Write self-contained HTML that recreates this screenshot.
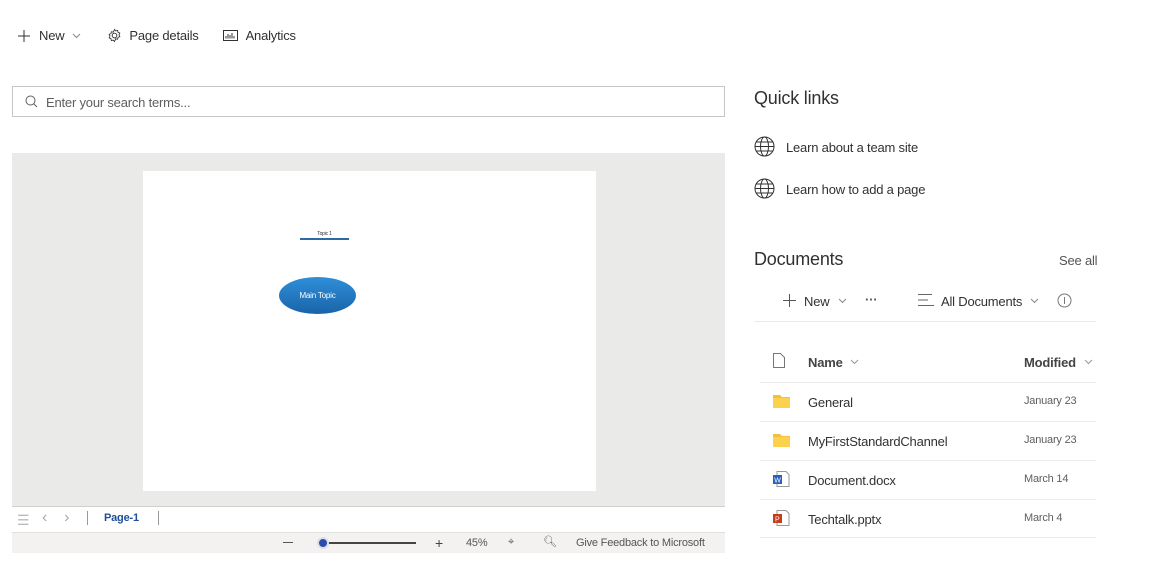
<!DOCTYPE html>
<html><head><meta charset="utf-8"><style>
*{box-sizing:border-box;margin:0;padding:0}
body{width:1160px;height:570px;background:#fff;font-family:"Liberation Sans",sans-serif;color:#323130;position:relative;overflow:hidden;font-size:13px;letter-spacing:-0.2px}
.a{position:absolute}
.row{position:absolute;left:760px;width:336px;height:39px;border-bottom:1px solid #edebe9}
.row .n{position:absolute;left:48px;top:12px;font-size:13px;color:#323130}
.row .d{position:absolute;left:264px;top:12px;font-size:11px;color:#605e5c}
.row .ic{position:absolute;left:13px;top:12px}
</style></head><body>
<div class="a" style="left:17px;top:28px;font-size:13px;display:flex;align-items:center">
<svg width="14" height="14" viewBox="0 0 14 14"><path d="M7 1v12M1 7h12" stroke="#323130" stroke-width="1"/></svg>
<span style="margin-left:8px">New</span><svg style="margin-left:8px" width="9" height="6" viewBox="0 0 9 6"><path d="M1 1l3.5 3.5L8 1" stroke="#888" fill="none"/></svg>
<svg style="margin-left:26px" width="15" height="15" viewBox="0 0 16 16"><circle cx="8" cy="8" r="2.5" fill="none" stroke="#323130"/><path d="M8 1.5l1.3 1.6 2-.5.5 2 1.9.8-.9 1.9.9 1.9-1.9.8-.5 2-2-.5L8 14.5l-1.3-1.6-2 .5-.5-2-1.9-.8.9-1.9-.9-1.9 1.9-.8.5-2 2 .5z" fill="none" stroke="#323130" stroke-width=".9"/></svg>
<span style="margin-left:7px">Page details</span>
<svg style="margin-left:24px" width="15" height="13" viewBox="0 0 15 13"><rect x=".5" y="1.5" width="14" height="10" fill="none" stroke="#323130"/><path d="M3 9.5V7M5 9.5V5M7 9.5V6M9 9.5V4M11 9.5V7" stroke="#323130"/></svg>
<span style="margin-left:8px">Analytics</span></div>
<div class="a" style="left:12px;top:86px;width:713px;height:31px;border:1px solid #c8c6c4"></div>
<svg class="a" style="left:25px;top:95px" width="13" height="13" viewBox="0 0 13 13"><circle cx="5.5" cy="5.5" r="4.5" fill="none" stroke="#605e5c"/><path d="M8.7 8.7L12 12" stroke="#605e5c"/></svg>
<div class="a" style="left:46px;top:95px;font-size:13px;color:#605e5c">Enter your search terms...</div>
<div class="a" style="left:12px;top:153px;width:713px;height:354px;background:#eaeae8"></div>
<div class="a" style="left:143px;top:171px;width:453px;height:320px;background:#fff"></div>
<div class="a" style="left:300px;top:231px;width:49px;font-size:5px;text-align:center">Topic 1</div>
<div class="a" style="left:300px;top:238px;width:49px;height:2px;background:#2d6aa3"></div>
<div class="a" style="left:279px;top:277px;width:77px;height:37px;border-radius:50%;background:linear-gradient(#2e8fd9,#1a64a8);color:#fff;font-size:8px;text-align:center;line-height:37px">Main Topic</div>
<div class="a" style="left:12px;top:506px;width:713px;height:1px;background:#d2d0ce"></div>
<div class="a" style="left:17px;top:512px;color:#bbb;font-size:14px">☰</div>
<div class="a" style="left:42px;top:509px;color:#aaa;font-size:16px">‹&nbsp;&nbsp;&nbsp;&nbsp;›</div>
<div class="a" style="left:87px;top:511px;width:1px;height:14px;background:#999"></div>
<div class="a" style="left:104px;top:512px;font-size:11px;color:#1f4e99;font-weight:bold">Page-1</div>
<div class="a" style="left:158px;top:511px;width:1px;height:14px;background:#999"></div>
<div class="a" style="left:12px;top:532px;width:713px;height:21px;background:#f3f2f1;border-top:1px solid #e1dfdd"></div>
<div class="a" style="left:283px;top:542px;width:10px;height:1px;background:#555"></div>
<div class="a" style="left:322px;top:542px;width:94px;height:2px;background:#444"></div>
<div class="a" style="left:317px;top:537px;width:12px;height:12px;border-radius:50%;background:#2b4fa8;border:2px solid #dde"></div>
<div class="a" style="left:435px;top:535px;font-size:14px;color:#444">+</div>
<div class="a" style="left:466px;top:537px;font-size:11px;color:#555">45%</div>
<div class="a" style="left:508px;top:536px;font-size:11px;color:#666">⌖</div>
<div class="a" style="left:543px;top:535px;font-size:11px;color:#666">🔍︎</div>
<div class="a" style="left:576px;top:537px;font-size:11px;color:#555">Give Feedback to Microsoft</div>
<div class="a" style="left:754px;top:88px;font-size:18px">Quick links</div>
<svg class="a" style="left:754px;top:136px" width="21" height="21" viewBox="0 0 21 21"><g fill="none" stroke="#323130"><circle cx="10.5" cy="10.5" r="9.5"/><ellipse cx="10.5" cy="10.5" rx="4" ry="9.5"/><path d="M1 10.5h19M2.5 6h16M2.5 15h16"/></g></svg>
<div class="a" style="left:786px;top:140px">Learn about a team site</div>
<svg class="a" style="left:754px;top:178px" width="21" height="21" viewBox="0 0 21 21"><g fill="none" stroke="#323130"><circle cx="10.5" cy="10.5" r="9.5"/><ellipse cx="10.5" cy="10.5" rx="4" ry="9.5"/><path d="M1 10.5h19M2.5 6h16M2.5 15h16"/></g></svg>
<div class="a" style="left:786px;top:182px">Learn how to add a page</div>
<div class="a" style="left:754px;top:249px;font-size:18px">Documents</div>
<div class="a" style="left:1059px;top:253px;font-size:13px;color:#555">See all</div>
<svg class="a" style="left:783px;top:294px" width="13" height="13"><path d="M6.5 0v13M0 6.5h13" stroke="#555"/></svg>
<div class="a" style="left:804px;top:294px">New</div>
<svg class="a" style="left:838px;top:298px" width="9" height="6"><path d="M1 1l3.5 3.5L8 1" stroke="#888" fill="none"/></svg>
<div class="a" style="left:865px;top:292px;color:#555;font-weight:bold">···</div>
<svg class="a" style="left:918px;top:294px" width="16" height="12"><path d="M0 .5h14M0 6h10M0 11.5h16" stroke="#666"/></svg>
<div class="a" style="left:941px;top:294px">All Documents</div>
<svg class="a" style="left:1030px;top:298px" width="9" height="6"><path d="M1 1l3.5 3.5L8 1" stroke="#888" fill="none"/></svg>
<svg class="a" style="left:1057px;top:293px" width="15" height="15"><circle cx="7.5" cy="7.5" r="6.5" fill="none" stroke="#777"/><path d="M7.5 4v7" stroke="#777"/></svg>
<div class="a" style="left:754px;top:321px;width:342px;height:1px;background:#edebe9"></div>
<div class="row" style="top:344px"><svg class="ic" style="top:9px" width="12" height="15"><path d="M.5.5h7l4 4v10H.5z" fill="none" stroke="#777"/></svg><span class="n" style="top:11px;font-weight:bold;color:#444">Name</span><svg class="a" style="left:90px;top:15px" width="9" height="6"><path d="M1 1l3.5 3.5L8 1" stroke="#999" fill="none"/></svg><span class="a" style="left:264px;top:11px;font-weight:bold;color:#444">Modified</span><svg class="a" style="left:324px;top:15px" width="9" height="6"><path d="M1 1l3.5 3.5L8 1" stroke="#999" fill="none"/></svg></div>
<div class="row" style="top:383px"><svg class="ic" width="17" height="13"><path d="M0 0h7l2 2h8v11H0z" fill="#f5c037"/><rect y="3" width="17" height="10" fill="#fcd14e"/></svg><span class="n">General</span><span class="d">January 23</span></div>
<div class="row" style="top:422px"><svg class="ic" width="17" height="13"><path d="M0 0h7l2 2h8v11H0z" fill="#f5c037"/><rect y="3" width="17" height="10" fill="#fcd14e"/></svg><span class="n">MyFirstStandardChannel</span><span class="d">January 23</span></div>
<div class="row" style="top:461px"><svg class="ic" style="top:10px" width="17" height="16"><path d="M4 .5h9l3 3v12H4z" fill="#fff" stroke="#999"/><rect x="0" y="4" width="9" height="9" fill="#2b5fbf"/><text x="1.3" y="11.5" font-size="7" fill="#fff" font-family="Liberation Sans">W</text></svg><span class="n">Document.docx</span><span class="d">March 14</span></div>
<div class="row" style="top:500px;height:38px"><svg class="ic" style="top:10px" width="17" height="16"><path d="M4 .5h9l3 3v12H4z" fill="#fff" stroke="#999"/><rect x="0" y="4" width="9" height="9" fill="#c43e1c"/><text x="2" y="11.5" font-size="7" fill="#fff" font-family="Liberation Sans">P</text></svg><span class="n">Techtalk.pptx</span><span class="d">March 4</span></div>
</body></html>
